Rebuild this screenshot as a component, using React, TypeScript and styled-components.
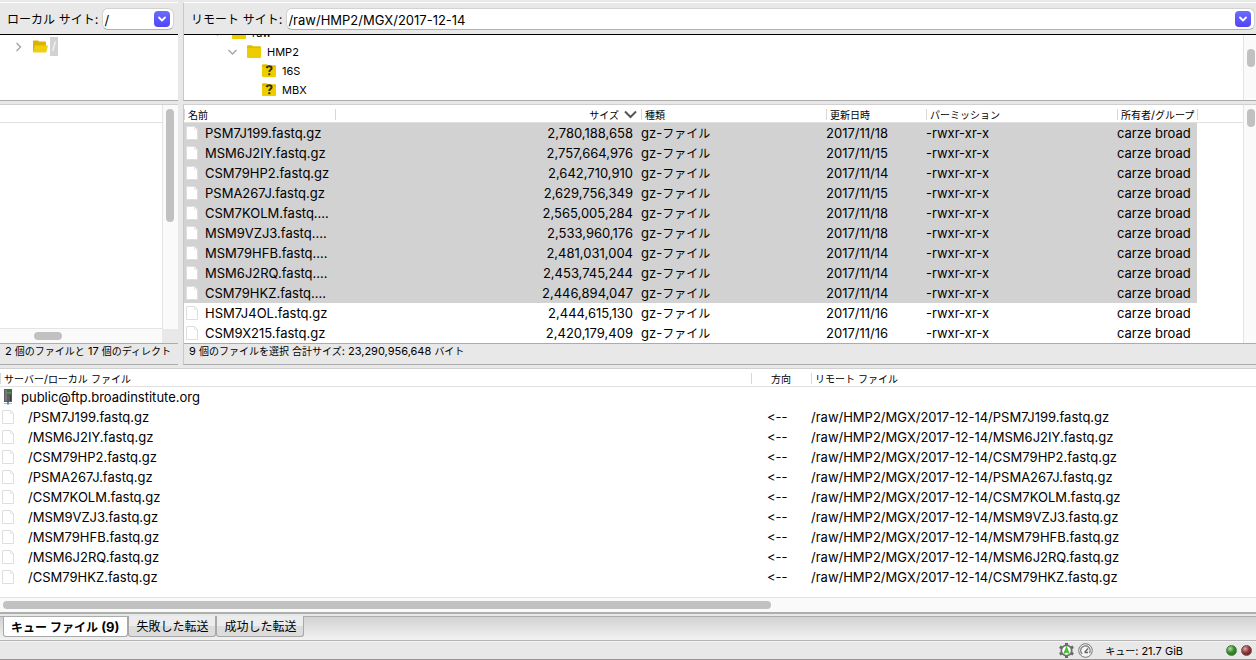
import React from 'react';
import styled, { createGlobalStyle, css } from 'styled-components';

const Global = createGlobalStyle`
  *, *::before, *::after { box-sizing: border-box; }
  body {
    margin: 0;
    background: #e8e8e8;
    color: #000;
    font-family: Inter, "Noto Sans CJK JP", sans-serif;
    font-size: 13px;
    font-feature-settings: "calt" 0;
  }
`;

/* Japanese glyphs are set slightly smaller than the Latin text beside them. */
const Jp = styled.span<{ $small?: boolean }>`
  font-family: "Noto Sans CJK JP", sans-serif;
  font-size: ${(p) => (p.$small ? 10 : 12)}px;
  line-height: 12px;
`;

const Page = styled.div`
  min-height: 100vh;
  display: flex;
  flex-direction: column;
  padding-top: 2px;
  overflow: hidden;
`;

const Sites = styled.div`
  display: grid;
  grid-template-columns: 178px minmax(0, 1fr);
  column-gap: 5px;
`;

const Site = styled.section`
  display: flex;
  flex-direction: column;
  min-width: 0;
  gap: 3px;
`;

const frame = css`
  border-top: 1px solid #d0d0d0;
  border-bottom: 1px solid #acacac;
`;

const TreePane = styled.div<{ $edge?: boolean }>`
  ${frame}
  border-top-color: #fff;
  border-left: ${(p) => (p.$edge ? '1px solid #c8c8c8' : '0')};
  background: #fff;
`;

const PathBar = styled.div<{ $right: number }>`
  height: 32px;
  display: flex;
  align-items: center;
  gap: 4px;
  padding: 0 ${(p) => p.$right}px 0 7px;
  background: #e8e8e8;
  border-bottom: 1px solid #000;
`;

const PathLabel = styled.label`
  white-space: nowrap;
  line-height: 20px;
`;

const Combo = styled.div`
  flex: 1;
  min-width: 0;
  height: 22px;
  margin-top: 1px;
  display: flex;
  align-items: center;
  padding-right: 3px;
  background: #fff;
  border: 1px solid #d2d2d2;
  border-bottom-color: #aeb2ae;
  border-radius: 6px;
`;

const PathInput = styled.input`
  flex: 1;
  min-width: 0;
  height: 20px;
  border: 0;
  outline: 0;
  padding: 2px 0 0 1px;
  background: transparent;
  color: #000;
  font: inherit;
`;

const DropButton = styled.button`
  width: 16px;
  height: 16px;
  padding: 0;
  display: grid;
  place-items: center;
  border: 0;
  border-radius: 4px;
  background: linear-gradient(#6a6cff, #5145f5);
`;

const TreeBody = styled.div`
  height: 65px;
  display: flex;
`;

const TreeList = styled.ul<{ $end?: boolean }>`
  flex: 1;
  margin: 0;
  padding: ${(p) => (p.$end ? '0 0 1px' : '2px 0 0')};
  list-style: none;
  overflow: hidden;
  display: flex;
  flex-direction: column;
  justify-content: ${(p) => (p.$end ? 'flex-end' : 'flex-start')};
`;

const TreeItem = styled.li<{ $indent: number }>`
  flex: none;
  height: 19px;
  display: flex;
  align-items: center;
  padding-left: ${(p) => p.$indent}px;
  font-size: 11px;
`;

const Twisty = styled.span`
  width: 20px;
  height: 12px;
  flex: none;
  display: flex;
`;

const TreeLabel = styled.span<{ $selected?: boolean }>`
  margin-left: ${(p) => (p.$selected ? 2 : 5)}px;
  line-height: 19px;
  padding: ${(p) => (p.$selected ? '0 2px' : '1px 0 0')};
  background: ${(p) => (p.$selected ? '#d2d2d2' : 'transparent')};
  color: ${(p) => (p.$selected ? '#fff' : '#000')};
`;

const VTrack = styled.div<{ $top: number; $wide?: boolean }>`
  flex: none;
  width: ${(p) => (p.$wide ? 16 : 13)}px;
  padding: ${(p) => p.$top}px 0 0 3px;
  border-left: 1px solid #e4e4e4;
  background: #fafafa;
`;

const VThumb = styled.div<{ $size: number }>`
  width: 8px;
  height: ${(p) => p.$size}px;
  border-radius: 4px;
  background: #c1c1c1;
`;

const ListPane = styled.div<{ $edge?: boolean }>`
  ${frame}
  flex: 1;
  border-left: ${(p) => (p.$edge ? '1px solid #c8c8c8' : '0')};
  background: #fff;
  display: flex;
  flex-direction: column;
`;

const ListBody = styled.div`
  flex: 1;
  display: flex;
  min-width: 0;
  border-bottom: 1px solid #acacac;
`;

const EmptyList = styled.div`
  flex: 1;
  display: flex;
  flex-direction: column;
`;

const EmptyHeader = styled.div`
  height: 18px;
  border-bottom: 1px solid #e0e0e0;
`;

const EmptyFill = styled.div`
  flex: 1;
`;

const SideTrack = styled.div`
  display: flex;
  flex-direction: column;
`;

const SideScroll = styled(VTrack)`
  flex: 1;
`;

const Corner = styled.div`
  height: 14px;
  background: #e8e8e8;
`;

const HTrack = styled.div<{ $left: number }>`
  flex: none;
  height: 15px;
  padding: 3px 0 0 ${(p) => p.$left}px;
  border-top: 1px solid #e4e4e4;
  background: #fafafa;
`;

const HThumb = styled.div<{ $width: string }>`
  width: ${(p) => p.$width};
  height: 8px;
  border-radius: 4px;
  background: #c1c1c1;
`;

const StatusLine = styled.div`
  height: 20px;
  padding-left: 5px;
  background: #e8e8e8;
  font-size: 11px;
  line-height: 15px;
  white-space: nowrap;
  overflow: hidden;
`;

const Table = styled.table`
  width: 100%;
  table-layout: fixed;
  border-collapse: separate;
  border-spacing: 0;
`;

const Head = styled.th<{ $right?: boolean; $indent?: number }>`
  height: 18px;
  padding: 2px 4px 0 ${(p) => p.$indent ?? 4}px;
  border-bottom: 1px solid #e0e0e0;
  background: linear-gradient(#d8d8d8, #d8d8d8) 0 4px / 1px 11px no-repeat;
  font-size: 11px;
  font-weight: 400;
  line-height: 14px;
  text-align: ${(p) => (p.$right ? 'right' : 'left')};
  white-space: nowrap;
`;

const SortMark = styled.svg`
  margin-left: 5px;
  vertical-align: 0;
`;

const Cell = styled.td<{ $right?: boolean; $fill?: string; $indent?: number }>`
  height: 20px;
  padding: 0 8px 0 ${(p) => p.$indent ?? 0}px;
  background: ${(p) => p.$fill ?? 'transparent'};
  line-height: 20px;
  text-align: ${(p) => (p.$right ? 'right' : 'left')};
  white-space: nowrap;
`;

const Named = styled.span<{ $gap: number }>`
  display: flex;
  align-items: center;
  gap: ${(p) => p.$gap}px;
  height: 20px;

  svg { flex: none; }
`;

const Queue = styled.section`
  flex: 1;
  display: flex;
  flex-direction: column;
  margin-top: 3px;
  border-top: 1px solid #d0d0d0;
  background: #fff;
`;

const QueueRows = styled.div`
  flex: 1;
`;

const Tabs = styled.div`
  height: 29px;
  display: flex;
  align-items: flex-start;
  padding: 0 3px;
  border-top: 2px solid #acb0ac;
  border-bottom: 1px solid #b4b4b4;
  background: linear-gradient(#e8e8e8 2px, #acacac 2px, #acacac 3px, #d2d2d2 3px, #f2f2f2);
`;

const Tab = styled.button<{ $active?: boolean }>`
  height: ${(p) => (p.$active ? 20 : 21)}px;
  margin-top: ${(p) => (p.$active ? 3 : 2)}px;
  padding: 0 ${(p) => (p.$active ? 8 : 7)}px 0 7px;
  border: 1px solid #a8a8a8;
  border-top: 0;
  border-radius: 0 0 3px 3px;
  background: ${(p) => (p.$active ? '#fff' : 'linear-gradient(#ececec 50%, #dcdcdc 50%)')};
  color: #000;
  font-family: inherit;
  font-size: 13px;
  font-weight: ${(p) => (p.$active ? 700 : 400)};
  line-height: 18px;
  white-space: nowrap;
`;

const Footer = styled.footer`
  height: 19px;
  display: flex;
  align-items: center;
  justify-content: flex-end;
  padding-right: 4px;
  border-top: 1px solid #f4f4f4;
  border-bottom: 1px solid #9a9496;
  font-size: 11px;
  line-height: 16px;
`;

const FooterIcons = styled.span`
  display: flex;
  gap: 4px;
  margin-right: 12px;
`;

const Lights = styled.span`
  display: flex;
  gap: 4px;
  margin-left: 43px;
`;

const Light = styled.span<{ $on?: boolean }>`
  width: 11px;
  height: 11px;
  border-radius: 50%;
  border: 1px solid ${(p) => (p.$on ? '#4a7a45' : '#7a4a4a')};
  background: ${(p) =>
    p.$on
      ? 'radial-gradient(circle at 35% 30%, #b5e0a8, #3a8a2c 45%, #1e6a18)'
      : 'radial-gradient(circle at 35% 30%, #dcb0b0, #8c3a38 45%, #5e1414)'};
`;

const Chevron = ({ open }: { open?: boolean }) => (
  <svg width="12" height="12" viewBox="0 0 12 12" fill="none" stroke="#a4a4a4" strokeWidth="1.4">
    <path d={open ? 'M1.500 4l4 4 4-4' : 'M4.500 2l4 4-4 4'} />
  </svg>
);

const Folder = ({ kind }: { kind: 'open' | 'plain' | 'unknown' }) => (
  <svg width={kind === 'open' ? 16 : 15} height="14" viewBox={kind === 'open' ? '0 0 16 14' : '0 0 15 14'}>
    {kind === 'open' ? (
      <>
        <path d="M1 1.500q0-1 1-1h4l1 1h6q1 0 1 1v9.500H2q-1 0-1-1z" fill="#d9b400" />
        <path d="M3 5.500h13l-1.500 6q-.3 1-1 1H1.200z" fill="#f0cf10" />
      </>
    ) : (
      <>
        <path d="M0 1.500q0-1 1-1h4l1 1h7q1 0 1 1v9.500q0 1-1 1H1q-1 0-1-1z" fill="#edcc00" />
        <path d="M0 1.500q0-1 1-1h4l1 1h7q1 0 1 1v.5H0z" fill="#dfbb00" />
      </>
    )}
    {kind === 'unknown' && (
      <g fill="none" stroke="#3b3100" strokeWidth="2">
        <path d="M4.800 4.200Q5 2.300 7.300 2.300T9.600 4.200Q9.600 5.200 8.400 6T7.300 8" />
        <path d="M7.300 9.200v2" />
      </g>
    )}
  </svg>
);

const FileIcon = () => (
  <svg width="14" height="16" viewBox="0 0 14 16">
    <path d="M1.500 1.500h8l3 3v10h-11z" fill="#fff" stroke="#dedede" />
    <path d="M9.500 1.500v3h3" fill="none" stroke="#e8e8e8" />
  </svg>
);

const ServerIcon = () => (
  <svg width="8" height="16" viewBox="0 0 8 16">
    <path d="M0 0h8v13H0z" fill="#5c5c5c" />
    <path d="M1 1h2v11H1z" fill="#777" />
    <path d="M3 3h4v1.500H3z" fill="#38a832" />
    <path d="M6 6h1v6H6z" fill="#3c3c3c" />
    <path d="M0 14.500h8" stroke="#b8b8b8" />
    <path d="M3 13h2v2.500H3z" fill="#5d83e0" />
  </svg>
);

const Gear = () => (
  <svg width="15" height="15" viewBox="0 0 15 15">
    <g stroke="#666" strokeWidth="3">
      <path d="M7.500 0v15M0.800 3.800l13.400 7.400M0.800 11.200L14.200 3.800" />
    </g>
    <circle cx="7.500" cy="7.500" r="5.200" fill="#fff" stroke="#707070" strokeWidth="1.800" />
    <path d="M5.300 10.500L7.500 5l2.200 5.500M6.200 8.800h2.600" fill="none" stroke="#35c41e" strokeWidth="1.700" />
  </svg>
);

const Gauge = () => (
  <svg width="15" height="15" viewBox="0 0 15 15" fill="none">
    <circle cx="7.500" cy="7.500" r="6.800" fill="#f4f4f4" stroke="#777" />
    <path d="M4.200 11a4.700 4.700 0 1 1 7.200-1" stroke="#8a8a8a" strokeWidth="1.500" />
    <path d="M6.500 9.500L10 5.500M7 9.500h3" stroke="#666" strokeWidth="1.300" />
  </svg>
);

const Drop = ({ label }: { label: string }) => (
  <DropButton aria-label={label}>
    <svg width="10" height="8" viewBox="0 0 10 8" fill="none" stroke="#fff" strokeWidth="1.800" strokeLinecap="round" strokeLinejoin="round">
      <path d="M2 2.500l3 3 3-3" />
    </svg>
  </DropButton>
);

const files = [
  ['PSM7J199.fastq.gz', '2,780,188,658', '2017/11/18'],
  ['MSM6J2IY.fastq.gz', '2,757,664,976', '2017/11/15'],
  ['CSM79HP2.fastq.gz', '2,642,710,910', '2017/11/14'],
  ['PSMA267J.fastq.gz', '2,629,756,349', '2017/11/15'],
  ['CSM7KOLM.fastq....', '2,565,005,284', '2017/11/18'],
  ['MSM9VZJ3.fastq....', '2,533,960,176', '2017/11/18'],
  ['MSM79HFB.fastq....', '2,481,031,004', '2017/11/14'],
  ['MSM6J2RQ.fastq....', '2,453,745,244', '2017/11/14'],
  ['CSM79HKZ.fastq....', '2,446,894,047', '2017/11/14'],
  ['HSM7J4OL.fastq.gz', '2,444,615,130', '2017/11/16'],
  ['CSM9X215.fastq.gz', '2,420,179,409', '2017/11/16'],
];

const selectedCount = 9;

const queued = ['PSM7J199', 'MSM6J2IY', 'CSM79HP2', 'PSMA267J', 'CSM7KOLM', 'MSM9VZJ3', 'MSM79HFB', 'MSM6J2RQ', 'CSM79HKZ'];

export default function App() {
  return (
    <>
      <Global />
      <Page>
        <Sites>
          <Site>
            <TreePane>
              <PathBar $right={4}>
                <PathLabel htmlFor="local"><Jp>ローカル</Jp> <Jp>サイト</Jp>:</PathLabel>
                <Combo>
                  <PathInput id="local" defaultValue="/" />
                  <Drop label="ローカル サイト" />
                </Combo>
              </PathBar>
              <TreeBody>
                <TreeList>
                  <TreeItem $indent={12}>
                    <Twisty><Chevron /></Twisty>
                    <Folder kind="open" />
                    <TreeLabel $selected>/</TreeLabel>
                  </TreeItem>
                </TreeList>
              </TreeBody>
            </TreePane>
            <ListPane>
              <ListBody>
                <EmptyList>
                  <EmptyHeader />
                  <EmptyFill />
                  <HTrack $left={34}><HThumb $width="28px" /></HTrack>
                </EmptyList>
                <SideTrack>
                  <SideScroll $top={4} $wide><VThumb $size={113} /></SideScroll>
                  <Corner />
                </SideTrack>
              </ListBody>
              <StatusLine>2 <Jp $small>個のファイルと</Jp> 17 <Jp $small>個のディレクト</Jp></StatusLine>
            </ListPane>
          </Site>

          <Site>
            <TreePane $edge>
              <PathBar $right={1}>
                <PathLabel htmlFor="remote"><Jp>リモート</Jp> <Jp>サイト</Jp>:</PathLabel>
                <Combo>
                  <PathInput id="remote" defaultValue="/raw/HMP2/MGX/2017-12-14" />
                  <Drop label="リモート サイト" />
                </Combo>
              </PathBar>
              <TreeBody>
                <TreeList $end>
                  <TreeItem $indent={28}><Twisty><Chevron open /></Twisty><Folder kind="plain" /><TreeLabel>raw</TreeLabel></TreeItem>
                  <TreeItem $indent={43}><Twisty><Chevron open /></Twisty><Folder kind="plain" /><TreeLabel>HMP2</TreeLabel></TreeItem>
                  <TreeItem $indent={58}><Twisty /><Folder kind="unknown" /><TreeLabel>16S</TreeLabel></TreeItem>
                  <TreeItem $indent={58}><Twisty /><Folder kind="unknown" /><TreeLabel>MBX</TreeLabel></TreeItem>
                </TreeList>
                <VTrack $top={14}><VThumb $size={18} /></VTrack>
              </TreeBody>
            </TreePane>
            <ListPane $edge>
              <ListBody>
                <Table>
                  <colgroup>
                    <col width="151" /><col width="306" /><col width="185" /><col width="100" />
                    <col width="191" /><col width="80" /><col />
                  </colgroup>
                  <thead>
                    <tr>
                      <Head><Jp $small>名前</Jp></Head>
                      <Head $right>
                        <Jp $small>サイズ</Jp>
                        <SortMark width="13" height="9" viewBox="0 0 13 9" fill="none" stroke="#555" strokeWidth="2">
                          <path d="M1 1.500l5.500 5.500L12 1.500" />
                        </SortMark>
                      </Head>
                      <Head><Jp $small>種類</Jp></Head>
                      <Head><Jp $small>更新日時</Jp></Head>
                      <Head><Jp $small>パーミッション</Jp></Head>
                      <Head><Jp $small>所有者</Jp>/<Jp $small>グループ</Jp></Head>
                      <Head />
                    </tr>
                  </thead>
                  <tbody>
                    {files.map(([name, size, date], i) => {
                      const fill = i < selectedCount ? '#d2d2d2' : undefined;
                      return (
                        <tr key={name}>
                          <Cell $fill={fill} $indent={1}><Named $gap={6}><FileIcon />{name}</Named></Cell>
                          <Cell $fill={fill} $right>{size}</Cell>
                          <Cell $fill={fill}>gz-<Jp>ファイル</Jp></Cell>
                          <Cell $fill={fill}>{date}</Cell>
                          <Cell $fill={fill}>-rwxr-xr-x</Cell>
                          <Cell $fill={fill}>carze broad</Cell>
                          <td />
                        </tr>
                      );
                    })}
                  </tbody>
                </Table>
                <VTrack $top={4}><VThumb $size={18} /></VTrack>
              </ListBody>
              <StatusLine>
                9 <Jp $small>個のファイルを選択</Jp> <Jp $small>合計サイズ</Jp>: 23,290,956,648 <Jp $small>バイト</Jp>
              </StatusLine>
            </ListPane>
          </Site>
        </Sites>

        <Queue>
          <QueueRows>
            <Table>
              <colgroup><col width="751" /><col width="60" /><col /></colgroup>
              <thead>
                <tr>
                  <Head><Jp $small>サーバー</Jp>/<Jp $small>ローカル</Jp> <Jp $small>ファイル</Jp></Head>
                  <Head $indent={20}><Jp $small>方向</Jp></Head>
                  <Head><Jp $small>リモート</Jp> <Jp $small>ファイル</Jp></Head>
                </tr>
              </thead>
              <tbody>
                <tr>
                  <Cell colSpan={3} $indent={4}><Named $gap={9}><ServerIcon />public@ftp.broadinstitute.org</Named></Cell>
                </tr>
                {queued.map((name) => (
                  <tr key={name}>
                    <Cell $indent={1}><Named $gap={13}><FileIcon />/{name}.fastq.gz</Named></Cell>
                    <Cell $indent={16}>&lt;--</Cell>
                    <Cell>/raw/HMP2/MGX/2017-12-14/{name}.fastq.gz</Cell>
                  </tr>
                ))}
              </tbody>
            </Table>
          </QueueRows>
          <HTrack $left={3}><HThumb $width="61.3%" /></HTrack>
        </Queue>

        <Tabs>
          <Tab $active><Jp>キュー</Jp> <Jp>ファイル</Jp> (9)</Tab>
          <Tab><Jp>失敗した転送</Jp></Tab>
          <Tab><Jp>成功した転送</Jp></Tab>
        </Tabs>
        <Footer>
          <FooterIcons><Gear /><Gauge /></FooterIcons>
          <span><Jp $small>キュー</Jp>: 21.7 GiB</span>
          <Lights><Light $on /><Light /></Lights>
        </Footer>
      </Page>
    </>
  );
}
